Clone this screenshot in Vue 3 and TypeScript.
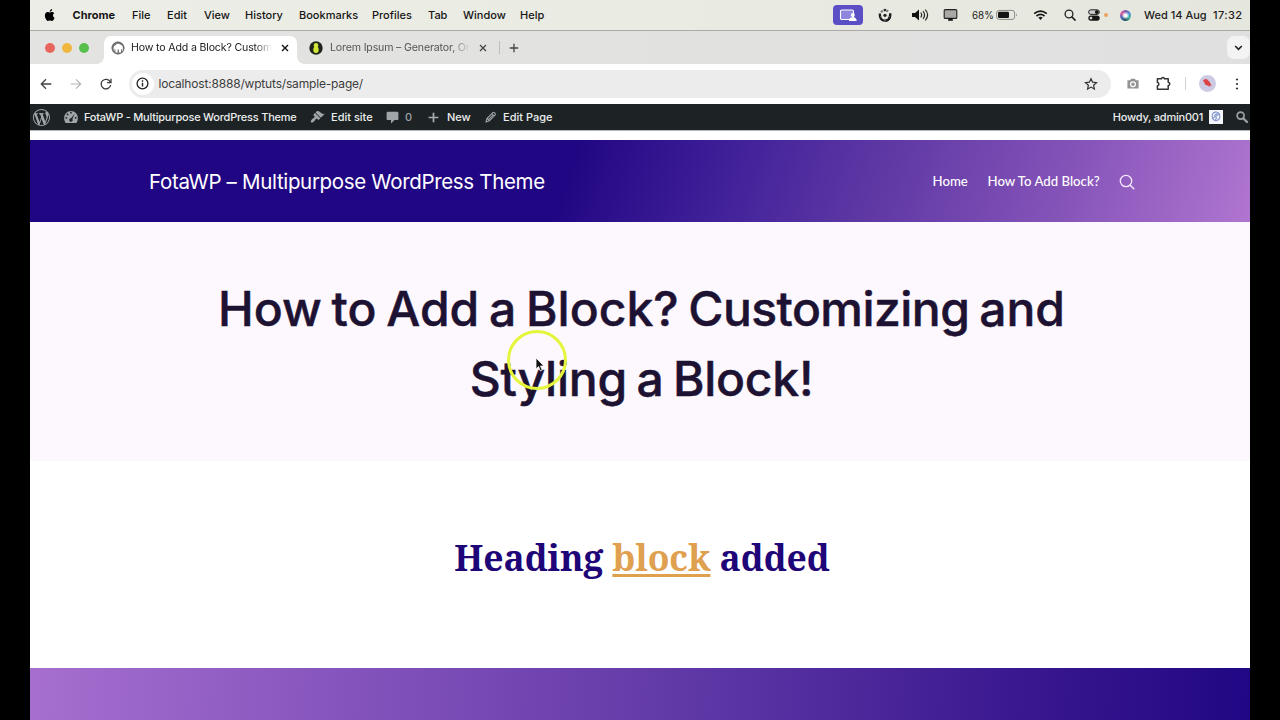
<script setup lang="ts">
interface MenuItem { label: string; cls: string }
const menus: MenuItem[] = [
  { label: 'Chrome', cls: 'm-chrome' },
  { label: 'File', cls: 'm-file' },
  { label: 'Edit', cls: 'm-edit' },
  { label: 'View', cls: 'm-view' },
  { label: 'History', cls: 'm-history' },
  { label: 'Bookmarks', cls: 'm-bookmarks' },
  { label: 'Profiles', cls: 'm-profiles' },
  { label: 'Tab', cls: 'm-tab' },
  { label: 'Window', cls: 'm-window' },
  { label: 'Help', cls: 'm-help' },
]
</script>

<template>
  <div class="stage">
    <div class="screen">
      <header class="menubar">
        <svg class="apple" viewBox="0 0 24 24"><path d="M17.1 12.7c0-2.6 2.1-3.8 2.2-3.9-1.2-1.8-3.1-2-3.7-2-1.6-.2-3.1.9-3.9.9-.8 0-2-.9-3.4-.9-1.7 0-3.3 1-4.2 2.5-1.8 3.100-.5 7.700 1.300 10.200.9 1.200 1.900 2.600 3.200 2.600 1.300-.1 1.800-.8 3.400-.8s2 .8 3.400.8c1.400 0 2.300-1.300 3.100-2.500 1-1.400 1.400-2.800 1.400-2.900-.1 0-2.800-1-2.800-4zM14.600 5.100c.7-.9 1.200-2.100 1.100-3.300-1 0-2.300.7-3 1.600-.7.7-1.200 1.900-1.100 3.100 1.100.1 2.300-.6 3-1.400z" /></svg>
        <nav class="menus">
          <span v-for="m in menus" :key="m.label" class="menu" :class="m.cls">{{ m.label }}</span>
        </nav>
        <div class="status">
          <span class="share">
            <svg viewBox="0 0 18 14"><rect x="1.500" y="2" width="13" height="9.500" rx="1.200" fill="#8f86de" stroke="#fff" stroke-width="1.100" /><circle cx="13.800" cy="7" r="2" fill="#fff" /><path d="M10 13c0-3 1.800-3.800 3.800-3.800s3.800.8 3.800 3.800z" fill="#fff" /></svg>
          </span>
          <svg class="s-orb" viewBox="0 0 14 14"><path d="M3 4.200Q7 .2 11 4.200" fill="none" stroke="#777" stroke-width="2.200" stroke-dasharray="2 1" /><path d="M1.800 5.500Q1.500 12.600 7 12.600t5.200-7.100" fill="none" stroke="#1c1c1c" stroke-width="2.300" /><path d="M12.200 5.500Q12.500 12.600 7 12.600" fill="none" stroke="#1c1c1c" stroke-width="2.300" /><path d="M2.500 8.700l1.800-.8M11.500 8.700l-1.800-.8M7 13v-2.500" stroke="#aaa" stroke-width=".8" /><circle cx="7" cy="7.300" r="1.600" fill="#222" /><circle cx="7" cy="2" r="1.300" fill="#333" /></svg>
          <svg class="s-vol" viewBox="0 0 18 14"><path d="M1 5h3l4-3.500v11L4 9H1z" fill="#111" /><path d="M10 5q1.300 2 0 4M12.300 3.500q2.500 3.500 0 7M14.600 2q4 5 0 10" fill="none" stroke="#222" stroke-width="1.200" stroke-linecap="round" /></svg>
          <svg class="s-mon" viewBox="0 0 14 14"><rect x=".7" y="1.600" width="12.600" height="8.800" rx="1" fill="#aaa9a6" stroke="#222" stroke-width="1.100" /><path d="M5 10.500h4l.5 2.200h-5z" fill="#111" /></svg>
          <span class="pct">68%</span>
          <svg class="s-bat" viewBox="0 0 22 12"><rect x=".6" y="1.400" width="18" height="9" rx="2.600" fill="none" stroke="#8a8a86" /><rect x="2" y="2.800" width="11" height="6.200" rx="1.200" fill="#151515" /><path d="M20 4.400q1.800 1.500 0 3z" fill="#777" /></svg>
          <svg class="s-wifi" viewBox="0 0 16 12"><path d="M1.300 4.500q6.700-5.400 13.400 0M3.700 7q4.300-3.400 8.600 0" fill="none" stroke="#151515" stroke-width="1.900" /><path d="M5.700 8.700q2.300-1.700 4.600 0L8 11.300z" fill="#151515" /></svg>
          <svg class="s-find" viewBox="0 0 12 12"><circle cx="5" cy="5" r="3.900" fill="none" stroke="#222" stroke-width="1.300" /><path d="M7.900 7.900l3.200 3.200" stroke="#222" stroke-width="1.500" stroke-linecap="round" /></svg>
          <svg class="s-ctl" viewBox="0 0 12 12"><rect x=".6" y=".8" width="10.800" height="4.600" rx="2.300" fill="#ccc" stroke="#222" /><circle cx="8.800" cy="3.100" r="1.900" fill="#111" /><rect x=".3" y="6.500" width="11.400" height="5.200" rx="2.600" fill="#151515" /><circle cx="3" cy="9.100" r="1.300" fill="#ddd" /></svg>
          <i class="dot" />
          <i class="siri" />
          <span class="date">Wed 14 Aug</span><span class="clock">17:32</span>
        </div>
      </header>

      <div class="tabs">
        <i class="light red" /><i class="light amber" /><i class="light green" />
        <div class="tab active">
          <svg class="fav" viewBox="0 0 14 14"><circle cx="7" cy="7" r="6.200" fill="#777" /><path d="M2.600 9V6.500q.3-2 2-2.300.9-1.500 2.700-1.400 2 .1 2.600 1.300 1.700.2 1.900 2V9q-.1 1.100-.8 1.300V8.200l-1 .1v3.300h-2V8.400H6.600v3.200H4.400V8.300l-.8-.8v2.300z" fill="#fff" /><circle cx="7" cy="7" r="6" fill="none" stroke="#666" stroke-width="1" /></svg>
          <span class="tab-title t1">How to Add a Block? Customi</span>
          <svg class="x" viewBox="0 0 10 10"><path d="M2 2l6 6M8 2l-6 6" stroke="#111" stroke-width="1.400" /></svg>
        </div>
        <div class="tab idle">
          <svg class="fav" viewBox="0 0 14 14"><circle cx="7" cy="7" r="6.700" fill="#20251c" /><circle cx="7" cy="4.400" r="2.300" fill="#d2e83a" /><ellipse cx="7" cy="8.800" rx="2.700" ry="3.200" fill="#d2e83a" /></svg>
          <span class="tab-title t2">Lorem Ipsum – Generator, Ori</span>
          <svg class="x" viewBox="0 0 10 10"><path d="M2 2l6 6M8 2l-6 6" stroke="#444" stroke-width="1.300" /></svg>
        </div>
        <i class="tab-sep" />
        <svg class="plus" viewBox="0 0 10 10"><path d="M5 .8v8.400M.8 5h8.400" stroke="#444" stroke-width="1.300" /></svg>
        <span class="chev"><svg viewBox="0 0 10 10"><path d="M2 3.600l3 3 3-3" fill="none" stroke="#222" stroke-width="1.500" /></svg></span>
      </div>

      <div class="toolbar">
        <svg class="nav-i back" viewBox="0 0 12 12"><path d="M11.300 6H1.500M6 1.300L1.300 6 6 10.700" fill="none" stroke="#444" stroke-width="1.300" /></svg>
        <svg class="nav-i fwd" viewBox="0 0 12 12"><path d="M.7 6h9.800M6 1.300L10.700 6 6 10.700" fill="none" stroke="#b4b4b4" stroke-width="1.200" /></svg>
        <svg class="nav-i reload" viewBox="0 0 12 12"><path d="M10.300 4A4.800 4.800 0 1 0 10.700 7" fill="none" stroke="#3a3a3a" stroke-width="1.300" /><path d="M11 .8v3.900H7.100" fill="none" stroke="#3a3a3a" stroke-width="1.300" /></svg>
        <div class="omni">
          <span class="info"><svg viewBox="0 0 12 12"><circle cx="6" cy="6" r="5" fill="none" stroke="#222" stroke-width="1.200" /><path d="M6 5.200v3.500M6 3v1.300" stroke="#222" stroke-width="1.300" /></svg></span>
          <span class="url">localhost:8888/wptuts/sample-page/</span>
          <svg class="star" viewBox="0 0 14 14"><path d="M7 1.700l1.600 3.500 3.900.4-2.900 2.600.8 3.800L7 10.100 3.600 12l.8-3.800-2.900-2.600 3.900-.4z" fill="none" stroke="#333" stroke-width="1.200" /></svg>
        </div>
        <svg class="cam" viewBox="0 0 14 14"><path d="M1 3.500h3l1-1.700h4l1 1.700h3v9H1z" fill="#929292" /><circle cx="7" cy="7.800" r="2.600" fill="#929292" stroke="#fff" stroke-width="1.300" /></svg>
        <svg class="puz" viewBox="0 0 14 14"><path d="M1.300 2.600h3.800q.2-1.300 1.400-1.300t1.400 1.300h3.500v3.300q1.500.2 1.500 1.500t-1.500 1.500v3.500H1.300V9.200q1.400-.3 1.400-1.600T1.300 6z" fill="none" stroke="#333" stroke-width="1.400" stroke-linejoin="round" /></svg>
        <i class="bar-sep" />
        <svg class="avatar" viewBox="0 0 17 17"><circle cx="8.500" cy="8.500" r="8.500" fill="#cccbe3" /><path d="M4 5.500l2-1.600 2 .4 2.700 2.600 2 4.100-2-.5-.3 1.500-1.500-1.600q-3 0-3.600-3z" fill="#dc4146" /></svg>
        <svg class="kebab" viewBox="0 0 4 12"><circle cx="2" cy="1.500" r="1.100" /><circle cx="2" cy="6" r="1.100" /><circle cx="2" cy="10.500" r="1.100" /></svg>
      </div>

      <div class="wpbar">
        <svg class="wp" viewBox="0 0 20 20"><path fill="#a0a5aa" d="M20 10c0-5.510-4.490-10-10-10C4.480 0 0 4.490 0 10c0 5.520 4.480 10 10 10 5.510 0 10-4.480 10-10zM7.780 15.370L4.370 6.220c.55-.02 1.170-.08 1.170-.08.5-.06.44-1.130-.06-1.110 0 0-1.450.11-2.370.11-.18 0-.37 0-.58-.01C4.120 2.690 6.870 1.110 10 1.110c2.330 0 4.450.87 6.050 2.340-.68-.11-1.650.39-1.650 1.580 0 .74.45 1.360.9 2.100.35.61.55 1.360.55 2.460 0 1.490-1.400 5-1.400 5l-3.030-8.370c.54-.02.82-.17.82-.17.5-.05.44-1.250-.06-1.220 0 0-1.440.12-2.380.12-.87 0-2.330-.12-2.330-.12-.5-.03-.56 1.200-.06 1.220l.92.08 1.260 3.410zM17.410 10c.24-.64.74-1.870.43-4.250.7 1.290 1.050 2.710 1.050 4.250 0 3.290-1.730 6.240-4.400 7.780.97-2.590 1.940-5.200 2.920-7.780zM6.100 18.090C3.120 16.650 1.110 13.530 1.110 10c0-1.300.23-2.480.72-3.590C3.250 10.300 4.670 14.200 6.100 18.090zm4.030-6.630l2.580 6.980c-.86.29-1.760.45-2.710.45-.79 0-1.570-.11-2.290-.33.81-2.380 1.620-4.740 2.420-7.100z" /></svg>
        <svg class="dash" viewBox="2 3 16 14"><path d="M3.760 17h12.480c1.340-1.630 1.760-3.750 1.760-6 0-4.420-3.580-8-8-8s-8 3.580-8 8c0 2.250.42 4.370 1.760 6z" fill="#a0a5aa" /><g fill="#1d2325"><circle cx="10" cy="5" r="1" /><circle cx="6" cy="7" r="1.100" /><circle cx="4.500" cy="11" r="1.100" /><circle cx="15.500" cy="11" r="1.100" /><path d="M14.300 6.200L11.600 12.200a2 2 0 1 1-1.500-.8z" /></g></svg>
        <span class="w w1">FotaWP - Multipurpose WordPress Theme</span>
        <svg class="brush" viewBox="0 1 20 18"><path fill="#a0a5aa" d="M14.480 11.060L7.410 3.990l1.500-1.500c.5-.56 2.300-.47 3.510.32 1.210.8 1.430 1.280 2.910 2.100 1.180.64 2.450 1.260 4.450.85zm-.71.71L6.700 4.700 4.930 6.470c-.39.39-.39 1.020 0 1.410l1.060 1.060c.39.39.39 1.030 0 1.420-.6.6-1.430 1.110-2.210 1.690-.35.26-.7.53-1.010.84C1.430 14.230.4 16.080 1.400 17.070c.99 1 2.840-.03 4.180-1.360.31-.31.58-.66.85-1.020.57-.78 1.080-1.610 1.690-2.210.39-.39 1.020-.39 1.410 0l1.060 1.060c.39.39 1.020.39 1.410 0z" /></svg>
        <span class="w w2">Edit site</span>
        <svg class="bubble" viewBox="0 0 13 13"><path d="M1.800.7h9.400q1.200 0 1.200 1.200v6q0 1.200-1.200 1.200H8.500L5 12.600V9.100H1.800Q.6 9.100.6 7.900v-6Q.6.7 1.800.7z" fill="#a0a5aa" /></svg>
        <span class="w w3">0</span>
        <svg class="add" viewBox="0 0 12 12"><path d="M6 .7v10.600M.7 6h10.600" stroke="#a7acb0" stroke-width="1.900" /></svg>
        <span class="w w4">New</span>
        <svg class="pen" viewBox="0 0 12 12"><path d="M1.100 10.900l.8-3.400 5.900-5.900q.8-.7 1.900.3t.5 2L4.400 9.800zM2.300 7.600l2 2M3.500 8.600l5-5M6.800 2.700l2.400 2.400" fill="none" stroke="#a0a5aa" stroke-width="1.100" /></svg>
        <span class="w w5">Edit Page</span>
        <span class="w howdy">Howdy, admin001</span>
        <svg class="who" viewBox="0 0 15 15"><rect width="15" height="15" fill="#f4f6fb" /><path d="M3.500 7a4 4 0 0 1 8-1.500q1 5-4 6-4-.5-4-4.500zM4.500 8.500L11 4M8 7.500l-1 4M5.500 6L9 3.500" fill="none" stroke="#8395cf" stroke-width="1.200" /></svg>
        <svg class="wfind" viewBox="0 0 12 12"><circle cx="4.600" cy="4.600" r="3.500" fill="none" stroke="#9ca2a7" stroke-width="1.700" /><path d="M7.200 7.200l3.800 3.800" stroke="#9ca2a7" stroke-width="2.300" stroke-linecap="round" /></svg>
      </div>

      <div class="sitehead">
        <span class="brand">FotaWP – Multipurpose WordPress Theme</span>
        <span class="link home">Home</span>
        <span class="link how">How To Add Block?</span>
        <svg class="sfind" viewBox="0 0 16 16"><circle cx="7" cy="7" r="5.700" fill="none" stroke="#f6e9ff" stroke-width="1.300" /><path d="M11.200 11.200l3.600 3.600" stroke="#f6e9ff" stroke-width="1.400" stroke-linecap="round" /></svg>
      </div>

      <section class="hero">
        <h1><span class="l1">How to Add a Block? <span class="tight">Customizing</span> and</span><span class="l2">Styling a Block!</span></h1>
      </section>

      <section class="body">
        <h2>Heading <span class="accent">block</span> added</h2>
      </section>

      <div class="band" />
      <i class="halo" />
      <svg class="cursor" viewBox="0 0 10 15"><path d="M1 1v11l2.600-2.400L5.300 14l2-.9L5.500 9H9z" fill="#111" stroke="#fff" stroke-width=".8" /></svg>
    </div>
  </div>
</template>

<style>
body { margin: 0; background: #000; overflow: hidden; }
</style>

<style scoped>
.stage { width: 1280px; height: 720px; background: #000; display: flex; justify-content: center; overflow: hidden; font-family: Inter, "Liberation Sans", sans-serif; }
.screen { position: relative; width: 1220px; height: 720px; display: flex; flex-direction: column; background: #fff; overflow: hidden; }
svg { display: block; flex: none; }
span { white-space: nowrap; }
i { display: block; flex: none; }

.menubar { height: 31px; flex: none; display: flex; align-items: center; background: linear-gradient(90deg, #ecede6, #eaebe2 50%, #e5e6de); border-bottom: 1px solid #a9aaa4; box-sizing: border-box; }
.apple { width: 14px; height: 14px; margin-left: 13px; }
.menus { display: flex; margin-left: 15.500px; font-size: 11px; font-weight: 500; color: #151515; }
.menu { flex: none; }
.m-chrome { width: 59.500px; font-weight: 700; }
.m-file { width: 35px; }
.m-edit { width: 37px; }
.m-view { width: 41px; }
.m-history { width: 54px; }
.m-bookmarks { width: 73px; }
.m-profiles { width: 56px; }
.m-tab { width: 35px; }
.m-window { width: 57px; }
.m-help { width: 30px; }
.status { margin-left: auto; display: flex; align-items: center; padding-right: 6px; font-size: 11px; color: #222; }
.share { width: 30px; height: 20px; border-radius: 4px; background: #5a4fc4; display: flex; align-items: center; justify-content: center; }
.share svg { width: 18px; height: 14px; }
.s-orb { width: 14px; height: 14px; margin-left: 15px; }
.s-vol { width: 18px; height: 14px; margin-left: 19px; }
.s-mon { width: 15px; height: 14px; margin-left: 14px; }
.pct { margin-left: 14px; width: 24px; font-size: 9.800px; }
.s-bat { width: 22px; height: 12px; }
.s-wifi { width: 15px; height: 12px; margin-left: 15px; }
.s-find { width: 12px; height: 12px; margin-left: 16px; }
.s-ctl { width: 12px; height: 12px; margin-left: 12px; }
.dot { width: 4px; height: 4px; border-radius: 50%; background: #eda35d; margin-left: 4px; }
.siri { width: 11px; height: 11px; border-radius: 50%; margin-left: 12px; background: radial-gradient(circle, #fff 0 15%, transparent 50%), conic-gradient(#8057a8, #4a8fd8, #3fb89a, #2a5963, #4169b6, #db5b9d, #8057a8); }
.date { margin-left: 13px; width: 69px; font-weight: 500; }
.clock { width: 31px; font-weight: 500; letter-spacing: .4px; }

.tabs { height: 33px; flex: none; display: flex; align-items: center; background: linear-gradient(90deg, #e3e4e1, #e0e0e0); }
.light { width: 10px; height: 10px; border-radius: 50%; margin-right: 7px; }
.red { background: #e8655d; margin-left: 15px; }
.amber { background: #efb73f; margin-right: 6.500px; }
.green { background: #56c04b; margin-right: 15.500px; }
.tab { display: flex; align-items: center; font-size: 10.600px; letter-spacing: -.16px; }
.active { position: relative; align-self: flex-end; box-sizing: border-box; height: 28px; padding-bottom: 5px; width: 193px; border-radius: 7px 7px 0 0; background: #fff; color: #222; }
.active::before, .active::after { content: ""; position: absolute; bottom: 0; width: 7px; height: 7px; }
.active::before { left: -7px; background: radial-gradient(circle at 0 0, transparent 6.500px, #fff 7px); }
.active::after { right: -7px; background: radial-gradient(circle at 100% 0, transparent 6.500px, #fff 7px); }
.fav { width: 14px; height: 14px; }
.active .fav { margin-left: 7px; }
.t1 { margin-left: 6px; width: 141px; -webkit-mask: linear-gradient(90deg, #000 88%, transparent); mask: linear-gradient(90deg, #000 88%, transparent); }
.t2 { margin-left: 7px; width: 140px; color: #555; -webkit-mask: linear-gradient(90deg, #000 86%, transparent); mask: linear-gradient(90deg, #000 86%, transparent); }
.x { width: 10px; height: 10px; margin-left: 8px; }
.idle { margin-left: 12px; }
.tab-sep { width: 1px; height: 13px; background: #bdbdbd; margin-left: 11px; }
.plus { width: 10px; height: 10px; margin-left: 9px; }
.chev { margin-left: auto; margin-right: 0; width: 23px; height: 23px; border-radius: 7px; background: #f3f3f3; display: flex; align-items: center; justify-content: center; }
.chev svg { width: 11px; height: 11px; }

.toolbar { height: 40px; flex: none; box-sizing: border-box; padding-bottom: 1px; display: flex; align-items: center; background: #fff; }
.nav-i { width: 12px; height: 12px; }
.back { margin-left: 10px; }
.fwd { margin-left: 18px; }
.reload { margin-left: 18px; }
.omni { width: 982px; height: 28px; margin-left: 16.500px; border-radius: 14px; background: #ececed; display: flex; align-items: center; }
.info { width: 22px; height: 22px; margin-left: 3px; border-radius: 50%; background: #fff; display: flex; align-items: center; justify-content: center; }
.info svg { width: 13px; height: 13px; }
.url { margin-left: 5px; font-size: 12px; letter-spacing: -.18px; color: #3c3c3c; }
.star { width: 14px; height: 14px; margin-left: auto; margin-right: 13px; }
.cam { width: 14px; height: 13px; margin-left: 15px; }
.puz { width: 15px; height: 15px; margin-left: 16px; }
.bar-sep { width: 1px; height: 13px; background: #d2d2d2; margin-left: 14.500px; }
.avatar { width: 17px; height: 17px; margin-left: 13px; }
.kebab { width: 4px; height: 12px; margin-left: 19px; fill: #333; }

.wpbar { height: 26px; flex: none; display: flex; align-items: center; background: #1d2325; color: #eceded; font-size: 11px; font-weight: 500; border-bottom: 1px solid #b7b7ba; }
.wp { width: 17px; height: 17px; margin-left: 3px; }
.dash { width: 14px; height: 12px; margin-left: 14px; }
.w1 { margin-left: 6px; width: 226px; letter-spacing: -.22px; }
.brush { width: 15px; height: 14px; }
.w2 { margin-left: 6px; width: 55px; }
.bubble { width: 13px; height: 13px; }
.w3 { margin-left: 6px; width: 23px; color: #9ca2a7; }
.add { width: 11px; height: 11px; }
.w4 { margin-left: 8px; width: 38px; }
.pen { width: 12px; height: 12px; }
.w5 { margin-left: 6px; }
.howdy { margin-left: auto; letter-spacing: -.22px; }
.who { width: 14px; height: 14px; margin-left: 6px; }
.wfind { width: 12px; height: 12px; margin-left: 13px; margin-right: 2px; }

.sitehead { margin-top: 9px; height: 82px; flex: none; display: flex; align-items: center; color: #fff; background: linear-gradient(108deg, #210683 0%, #210683 44%, #41219a 57%, #5c36a3 68%, #8453b8 84%, #b075d0 100%); }
.brand { margin-left: 119px; width: 783.500px; font-size: 20.500px; font-weight: 400; letter-spacing: -.33px; }
.link { font-family: Lato, sans-serif; font-size: 13.200px; font-weight: 500; }
.home { width: 55px; }
.how { width: 131px; }
.sfind { width: 16px; height: 16px; margin-top: 2px; }

.hero { height: 239px; flex: none; background: #fcf8fe; display: flex; justify-content: center; align-items: flex-start; }
h1 { margin: 52px 0 0 3px; font-size: 48px; line-height: 70px; font-weight: 500; -webkit-text-stroke: .5px #1e1233; color: #1e1233; text-align: center; display: flex; flex-direction: column; align-items: center; word-spacing: -3px; }
.tight { letter-spacing: -.55px; }
.l2 { letter-spacing: -.25px; }
.body { height: 207px; flex: none; display: flex; justify-content: center; align-items: flex-start; }
h2 { margin: 72px 0 0 4px; font-family: "Noto Serif", "DejaVu Serif Condensed", "DejaVu Serif", serif; font-size: 35.500px; line-height: 48px; font-weight: 700; letter-spacing: -.12px; color: #1f0678; }
.accent { color: #dfa050; text-decoration: underline; text-decoration-thickness: 3px; text-underline-offset: 3px; text-decoration-skip-ink: none; }
.band { flex: 1; background: linear-gradient(92deg, #a66fcf, #8252bb 28%, #5d36a5 56%, #3b1990 80%, #210784); }

.halo { position: absolute; left: 477px; top: 330px; width: 54px; height: 54px; border: 3px solid #e5f53c; border-radius: 50%; }
.cursor { position: absolute; left: 505px; top: 357px; width: 10px; height: 15px; }
</style>
